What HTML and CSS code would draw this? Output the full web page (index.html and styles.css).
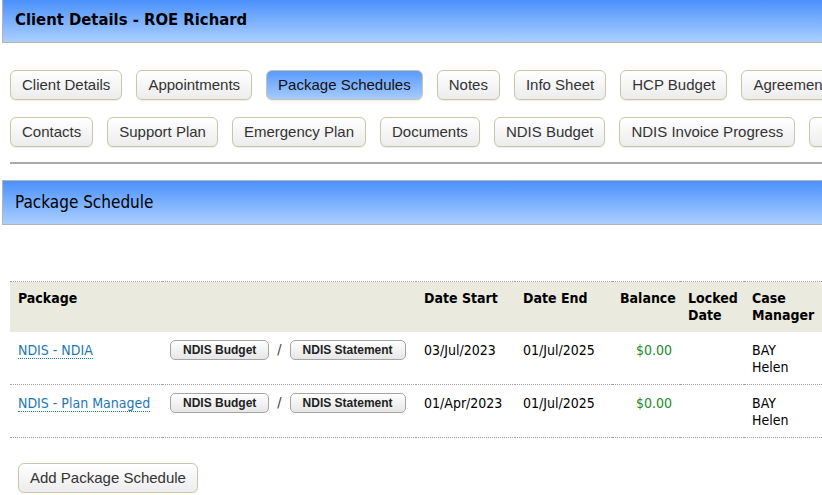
FILE: index.html
```html
<!DOCTYPE html>
<html lang="en">
<head>
    <meta charset="UTF-8">
    <title>Client Details - ROE Richard</title>
    <link rel="stylesheet" href="styles.css">
</head>
<body>
    <div class="page">
        <!-- Client header -->
        <div class="panel-head">Client Details - ROE Richard</div>

        <div class="tabs">
            <div class="tab-row">
                <a class="tab" href="#">Client Details</a>
                <a class="tab" href="#">Appointments</a>
                <a class="tab active" href="#">Package Schedules</a>
                <a class="tab" href="#">Notes</a>
                <a class="tab" href="#">Info Sheet</a>
                <a class="tab" href="#">HCP Budget</a>
                <a class="tab" href="#">Agreements</a>
            </div>
            <div class="tab-row">
                <a class="tab" href="#">Contacts</a>
                <a class="tab" href="#">Support Plan</a>
                <a class="tab" href="#">Emergency Plan</a>
                <a class="tab" href="#">Documents</a>
                <a class="tab" href="#">NDIS Budget</a>
                <a class="tab" href="#">NDIS Invoice Progress</a>
                <a class="tab" href="#">Funding</a>
            </div>
        </div>
        <hr class="divider">

        <!-- Package schedule -->
        <div class="panel-head section">Package Schedule</div>

        <table class="grid">
            <colgroup>
                <col class="w-name">
                <col class="w-btns">
                <col class="w-start">
                <col class="w-end">
                <col class="w-bal">
                <col class="w-lock">
                <col class="w-cm">
            </colgroup>
            <thead>
                <tr>
                    <th colspan="2">Package</th>
                    <th>Date Start</th>
                    <th>Date End</th>
                    <th>Balance</th>
                    <th>Locked Date</th>
                    <th>Case Manager</th>
                </tr>
            </thead>
            <tbody>
                <tr>
                    <td><a href="#">NDIS - NDIA</a></td>
                    <td class="btns"><button class="mini">NDIS Budget</button> <span class="sep">/</span> <button class="mini">NDIS Statement</button></td>
                    <td>03/Jul/2023</td>
                    <td>01/Jul/2025</td>
                    <td class="money">$0.00</td>
                    <td></td>
                    <td>BAY<br>Helen</td>
                </tr>
                <tr>
                    <td><a href="#">NDIS - Plan Managed</a></td>
                    <td class="btns"><button class="mini">NDIS Budget</button> <span class="sep">/</span> <button class="mini">NDIS Statement</button></td>
                    <td>01/Apr/2023</td>
                    <td>01/Jul/2025</td>
                    <td class="money">$0.00</td>
                    <td></td>
                    <td>BAY<br>Helen</td>
                </tr>
            </tbody>
        </table>

        <div class="actions">
            <button class="tab">Add Package Schedule</button>
        </div>
    </div>
</body>
</html>
```

FILE: styles.css
```css
/* General */
body {
    margin: 0;
    font-family: 'DejaVu Sans Condensed', 'DejaVu Sans', sans-serif;
    font-size: 14px;
    color: #000;
    background: #fff;
    overflow: hidden;
}

.page {
    width: 900px;
    padding-left: 2px;
}

/* Blue panel headers */
.panel-head {
    background: linear-gradient(to bottom, #4b91fc, #abcfff);
    border: 1px solid #b5b5b5;
    border-top: none;
    border-right: none;
    height: 42px;
    line-height: 40px;
    padding-left: 12px;
    font-size: 16.5px;
    font-weight: bold;
}

.panel-head.section {
    border-top: 1px solid #b5b5b5;
    font-weight: normal;
    font-size: 17px;
    height: 43px;
    line-height: 42px;
    margin-top: 16px;
}

/* Tabs */
.tabs {
    padding: 27px 0 0 8px;
}

.tab-row {
    display: flex;
    gap: 14px;
    margin-bottom: 17px;
    white-space: nowrap;
}

.tab {
    display: inline-block;
    flex: none;
    font-family: 'Liberation Sans', Arial, sans-serif;
    font-size: 15px;
    color: #333;
    text-decoration: none;
    height: 28px;
    line-height: 28px;
    padding: 0 11px;
    border: 1px solid #c9c6a9;
    border-radius: 6px;
    background: linear-gradient(to bottom, #ffffff, #ececec);
    box-shadow: 0 1px 1px rgba(0, 0, 0, 0.08);
    cursor: pointer;
}

.tab.active {
    background: linear-gradient(to bottom, #5a9bff, #a6cbff);
    color: #111;
}

.divider {
    border: none;
    border-top: 2px solid #aaa;
    margin: -2px 0 0 8px;
}

/* Table */
.grid {
    margin: 56px 0 0 8px;
    border-collapse: collapse;
    table-layout: fixed;
    width: 820px;
}

.w-name { width: 152px; }
.w-btns { width: 254px; }
.w-start { width: 99px; }
.w-end { width: 97px; }
.w-bal { width: 68px; }
.w-lock { width: 64px; }
.w-cm { width: 86px; }

.grid th,
.grid td {
    text-align: left;
    vertical-align: top;
    padding: 8px 8px 8px 8px;
    line-height: 17px;
}

.grid th {
    background: #ebeadf;
    font-weight: bold;
    border-top: 1px dotted #a0a0a0;
    height: 34px;
}

.grid td {
    border-bottom: 1px dotted #a0a0a0;
    height: 31px;
    padding-top: 10px;
    white-space: nowrap;
}

.grid td.btns {
    padding-top: 8px;
}

.grid a {
    color: #1d77b5;
    text-decoration: none;
    border-bottom: 1px dotted #1d77b5;
}

.grid td.money {
    color: #1b8a2c;
    text-align: right;
}

.mini {
    font-family: 'Liberation Sans', Arial, sans-serif;
    font-size: 12px;
    font-weight: bold;
    color: #222;
    height: 20px;
    padding: 0 12px;
    border: 1px solid #a5a5a5;
    border-radius: 5px;
    background: linear-gradient(to bottom, #ffffff, #e6e6e6);
}

.sep {
    margin: 0 4px;
    color: #333;
}

.actions {
    padding: 25px 0 0 16px;
}

.actions .tab {
    height: 30px;
}
```
